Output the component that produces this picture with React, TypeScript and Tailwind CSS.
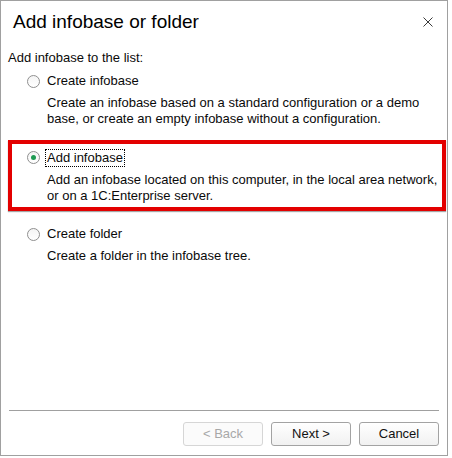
import React from "react";

interface OptionProps {
  label: string;
  description: string[];
  checked?: boolean;
}

const Radio: React.FC<{ checked?: boolean }> = ({ checked }) => (
  <span className="flex h-[13px] w-[13px] items-center justify-center rounded-full border border-[#8f8f8f] bg-gradient-to-b from-[#f4f4f4] to-white">
    {checked && <span className="h-[5px] w-[5px] rounded-full bg-[#1e9a52]" />}
  </span>
);

const Option: React.FC<OptionProps> = ({ label, description, checked }) => (
  <div className="flex">
    <div className="flex w-[39px] shrink-0 pl-[19px] pt-[2px]">
      <Radio checked={checked} />
    </div>
    <div className="flex flex-col">
      {checked ? (
        <span className="-ml-[2px] self-start border border-dotted border-black px-[1px] leading-[16px]">
          {label}
        </span>
      ) : (
        <span className="leading-[16px]">{label}</span>
      )}
      <div className={checked ? "mt-[5px]" : "mt-[6px]"}>
        {description.map((line) => (
          <div key={line} className="leading-[16px]">
            {line}
          </div>
        ))}
      </div>
    </div>
  </div>
);

const Button: React.FC<{ children: React.ReactNode; disabled?: boolean }> = ({
  children,
  disabled,
}) => (
  <button
    disabled={disabled}
    className={`h-[24px] w-[80px] rounded-[3px] border text-[13px] ${
      disabled
        ? "border-[#d6d6d6] bg-[#fbfbfb] text-[#a8a8a8]"
        : "border-[#a3a3a3] bg-gradient-to-b from-white to-[#f1f1f1] text-[#111]"
    }`}
  >
    {children}
  </button>
);

export default function App() {
  return (
    <div className="h-[458px] w-[452px] bg-white font-['Liberation_Sans',Arial,sans-serif] text-[13px] text-[#0a0a0a]">
      <div className="flex h-[456px] w-[448px] flex-col border border-[#a0a0a0] bg-white">
        {/* header */}
        <div className="flex items-start justify-between pt-[9px] pl-[12px] pr-[14px]">
          <h1 className="text-[19px] leading-[24px] text-black">Add infobase or folder</h1>
          <svg className="mt-[7px]" width="10" height="10" viewBox="0 0 10 10">
            <path d="M0.5 0.5 L9.5 9.5 M9.5 0.5 L0.5 9.5" stroke="#3a3a3a" strokeWidth="1" />
          </svg>
        </div>

        <div className="mt-[16px] pl-[7px]">
          <div className="leading-[16px]">Add infobase to the list:</div>

          <div className="mt-[7px]">
            <Option
              label="Create infobase"
              description={[
                "Create an infobase based on a standard configuration or a demo",
                "base, or create an empty infobase without a configuration.",
              ]}
            />
          </div>

          <div className="mt-[13px] w-[438px] border-4 border-[#e30000] pt-[5px] pb-[3px] shadow-[0_1px_1px_rgba(0,0,0,0.35)]">
            <div className="-ml-[4px]">
              <Option
                checked
                label="Add infobase"
                description={[
                  "Add an infobase located on this computer, in the local area network,",
                  "or on a 1C:Enterprise server.",
                ]}
              />
            </div>
          </div>

          <div className="mt-[15px]">
            <Option label="Create folder" description={["Create a folder in the infobase tree."]} />
          </div>
        </div>

        <div className="flex-1" />

        <div className="px-[8px]">
          <div className="h-px bg-[#a0a0a0]" />
          <div className="mt-[11px] mb-[9px] flex justify-end gap-[8px]">
            <Button disabled>&lt; Back</Button>
            <Button>Next &gt;</Button>
            <Button>Cancel</Button>
          </div>
        </div>
      </div>
    </div>
  );
}
